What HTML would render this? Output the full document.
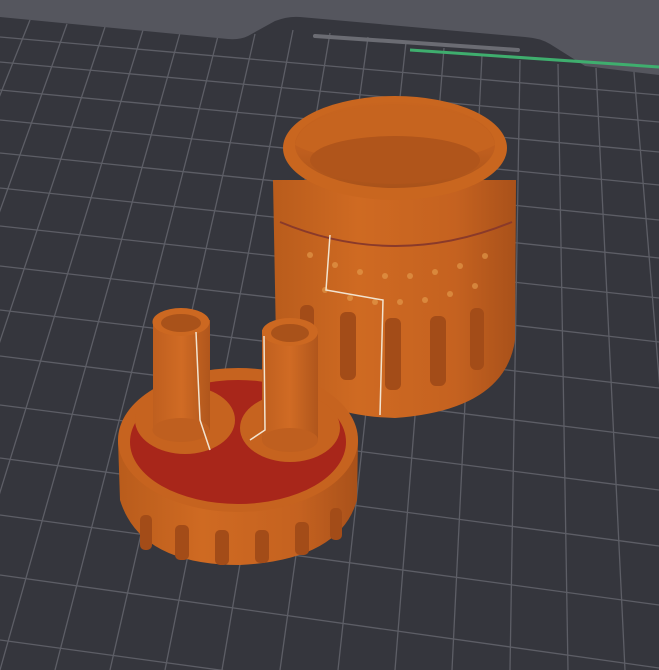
<!DOCTYPE html>
<html><head><style>
html,body{margin:0;padding:0;width:659px;height:670px;overflow:hidden;background:#35363d}
svg{display:block}
</style></head><body>
<svg width="659" height="670" viewBox="0 0 659 670" xmlns="http://www.w3.org/2000/svg">
<defs>
<linearGradient id="side" x1="0" x2="1" y1="0" y2="0">
<stop offset="0" stop-color="#b95c1c"/><stop offset="0.35" stop-color="#cf6a22"/><stop offset="0.75" stop-color="#c56220"/><stop offset="1" stop-color="#a9511a"/>
</linearGradient>
<linearGradient id="post" x1="0" x2="1">
<stop offset="0" stop-color="#bf5f1f"/><stop offset="0.5" stop-color="#d06b24"/><stop offset="1" stop-color="#b0561c"/>
</linearGradient>
<linearGradient id="inner" x1="0" x2="0" y1="0" y2="1">
<stop offset="0" stop-color="#c8651f"/><stop offset="0.55" stop-color="#c05f1e"/><stop offset="1" stop-color="#a9521a"/>
</linearGradient>
</defs>
<rect width="659" height="670" fill="#35363d"/>
<g stroke="#5d5e66" stroke-width="1.3" fill="none">
<line x1="0" y1="37" x2="659" y2="95"/>
<line x1="0" y1="62" x2="659" y2="122"/>
<line x1="0" y1="90" x2="659" y2="152"/>
<line x1="0" y1="120" x2="659" y2="185"/>
<line x1="0" y1="153" x2="659" y2="220"/>
<line x1="0" y1="188" x2="659" y2="258"/>
<line x1="0" y1="226" x2="659" y2="298"/>
<line x1="0" y1="266" x2="659" y2="342"/>
<line x1="0" y1="310" x2="659" y2="388"/>
<line x1="0" y1="356" x2="659" y2="438"/>
<line x1="0" y1="405" x2="659" y2="490"/>
<line x1="0" y1="458" x2="659" y2="546"/>
<line x1="0" y1="515" x2="659" y2="605"/>
<line x1="0" y1="575" x2="659" y2="668"/>
<line x1="0" y1="640" x2="659" y2="730"/>
<line x1="30" y1="20" x2="-230" y2="670"/>
<line x1="67" y1="24" x2="-165" y2="670"/>
<line x1="105" y1="27" x2="-110" y2="670"/>
<line x1="143" y1="30" x2="-55" y2="670"/>
<line x1="180" y1="33" x2="0" y2="670"/>
<line x1="218" y1="36" x2="55" y2="670"/>
<line x1="255" y1="34" x2="110" y2="670"/>
<line x1="293" y1="30" x2="165" y2="670"/>
<line x1="330" y1="33" x2="222" y2="670"/>
<line x1="368" y1="37" x2="280" y2="670"/>
<line x1="406" y1="42" x2="338" y2="670"/>
<line x1="444" y1="48" x2="395" y2="670"/>
<line x1="482" y1="55" x2="452" y2="670"/>
<line x1="520" y1="60" x2="510" y2="670"/>
<line x1="558" y1="64" x2="568" y2="670"/>
<line x1="596" y1="68" x2="625" y2="670"/>
<line x1="634" y1="72" x2="683" y2="670"/>
</g>
<path d="M0,0 H659 V75 L585,66 L550,44 Q540,38 525,37 L300,17 Q288,16 275,21 L248,36 Q240,40 228,39 L0,17 Z" fill="#55565e"/>
<line x1="315" y1="36" x2="518" y2="50" stroke="#6b6c73" stroke-width="4" stroke-linecap="round"/>
<line x1="410" y1="50" x2="659" y2="67" stroke="#3fae6e" stroke-width="3"/>
<!-- jar -->
<path d="M273,180 L276,340 Q285,415 395,418 Q505,410 515,340 L516,180 Z" fill="url(#side)"/>
<path d="M280,222 Q395,270 512,222" stroke="#8a3a2a" stroke-width="2" fill="none"/>
<ellipse cx="395" cy="148" rx="112" ry="52" fill="#c9661f"/>
<ellipse cx="395" cy="145" rx="100" ry="43" fill="url(#inner)"/>
<path d="M295,145 Q300,110 395,104 Q490,110 495,145 Q470,160 395,162 Q320,160 295,145 Z" fill="#c6641f"/>
<ellipse cx="395" cy="160" rx="85" ry="24" fill="#b0551b"/>
<g fill="#a34c18">
<rect x="300" y="305" width="14" height="60" rx="6"/><rect x="340" y="312" width="16" height="68" rx="6"/>
<rect x="385" y="318" width="16" height="72" rx="6"/><rect x="430" y="316" width="16" height="70" rx="6"/>
<rect x="470" y="308" width="14" height="62" rx="6"/>
</g>
<g fill="#e6a050" opacity="0.6">
<circle cx="310" cy="255" r="3"/><circle cx="335" cy="265" r="3"/><circle cx="360" cy="272" r="3"/><circle cx="385" cy="276" r="3"/><circle cx="410" cy="276" r="3"/><circle cx="435" cy="272" r="3"/><circle cx="460" cy="266" r="3"/><circle cx="485" cy="256" r="3"/>
<circle cx="325" cy="290" r="3"/><circle cx="350" cy="298" r="3"/><circle cx="375" cy="302" r="3"/><circle cx="400" cy="302" r="3"/><circle cx="425" cy="300" r="3"/><circle cx="450" cy="294" r="3"/><circle cx="475" cy="286" r="3"/>
</g>
<path d="M330,235 L326,290 L383,300 L380,415" stroke="#f2e4d0" stroke-width="1.5" fill="none"/>
<!-- lid -->
<path d="M118,440 L120,500 Q140,565 240,565 Q340,560 357,500 L358,440 Z" fill="url(#side)"/>
<ellipse cx="238" cy="440" rx="120" ry="72" fill="#c6631f"/>
<ellipse cx="238" cy="442" rx="108" ry="62" fill="#a8261a"/>
<g fill="#a34c18">
<rect x="140" y="515" width="12" height="35" rx="5"/><rect x="175" y="525" width="14" height="35" rx="5"/><rect x="215" y="530" width="14" height="35" rx="5"/><rect x="255" y="530" width="14" height="33" rx="5"/><rect x="295" y="522" width="14" height="33" rx="5"/><rect x="330" y="508" width="12" height="32" rx="5"/>
</g>
<ellipse cx="185" cy="420" rx="50" ry="34" fill="#c6631f"/>
<ellipse cx="290" cy="428" rx="50" ry="34" fill="#c6631f"/>
<rect x="153" y="320" width="57" height="110" fill="url(#post)"/>
<ellipse cx="181" cy="430" rx="28.5" ry="12" fill="#bf5f1f"/>
<ellipse cx="181" cy="322" rx="28.5" ry="14" fill="#cc6821"/>
<ellipse cx="181" cy="323" rx="20" ry="9" fill="#a9521a"/>
<rect x="262" y="330" width="56" height="110" fill="url(#post)"/>
<ellipse cx="290" cy="440" rx="28" ry="12" fill="#bf5f1f"/>
<ellipse cx="290" cy="332" rx="28" ry="14" fill="#cc6821"/>
<ellipse cx="290" cy="333" rx="19" ry="9" fill="#a9521a"/>
<path d="M196,332 L200,420 L210,450" stroke="#f2e4d0" stroke-width="1.5" fill="none"/>
<path d="M264,336 L265,430 L250,440" stroke="#f2e4d0" stroke-width="1.5" fill="none"/>
</svg>
</body></html>
